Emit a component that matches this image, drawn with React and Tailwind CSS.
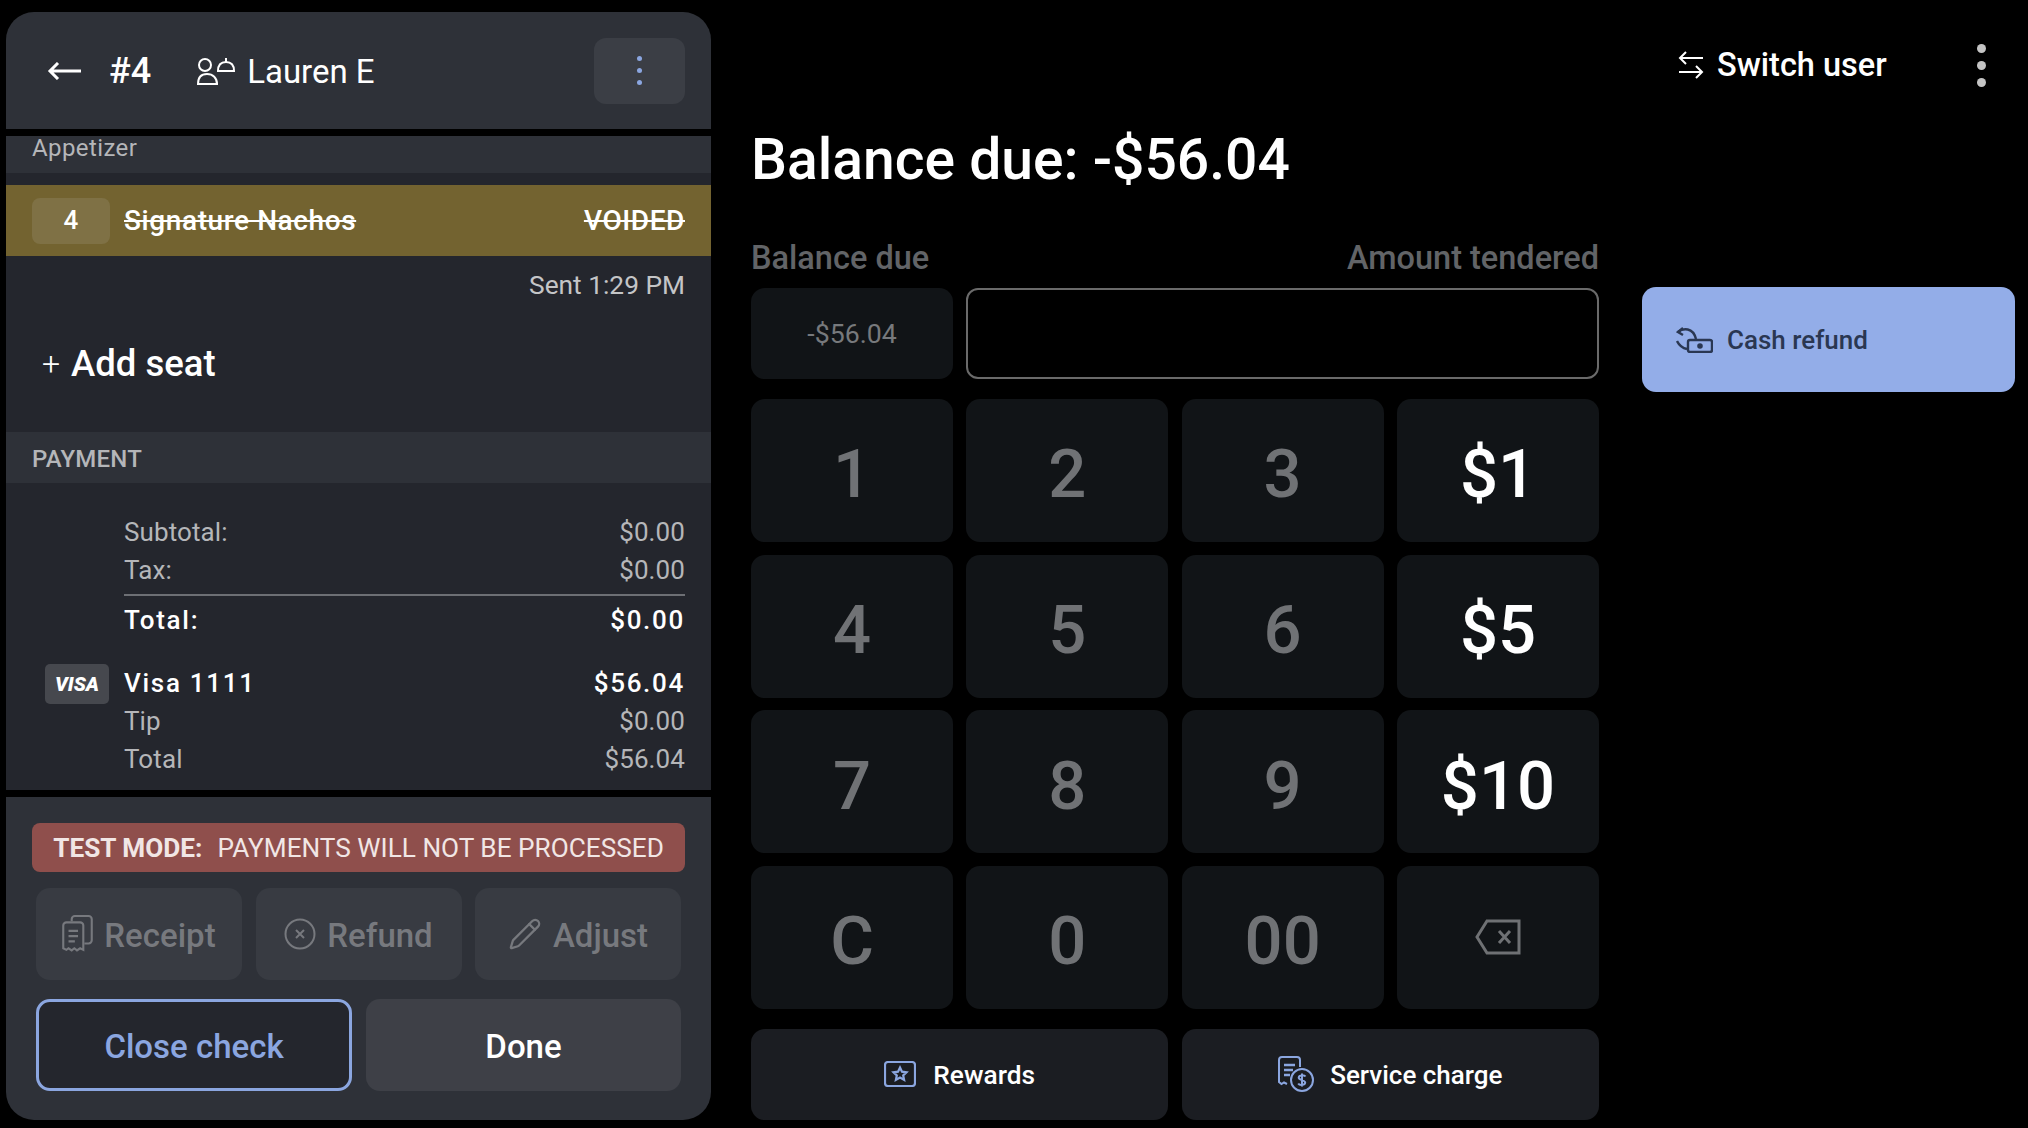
import { Pencil } from "lucide-react";

const SANS = "font-['Roboto','Liberation_Sans',sans-serif]";

const BackArrow = () => (
  <svg width="34" height="18" viewBox="0 0 34 18" fill="none" stroke="currentColor" strokeWidth="3">
    <path d="M34 9H3M11 1L3 9l8 8" />
  </svg>
);

const ServerIcon = () => (
  <svg width="38" height="28" viewBox="0 0 38 28" fill="none" stroke="currentColor" strokeWidth="2">
    <circle cx="8" cy="8" r="6" />
    <path d="M1 27c0-6 3-10 9-10s10 4 10 10z" />
    <path d="M21 14c0-6 3-9 8-9s8 3 8 9zM29 1v4" />
  </svg>
);

const SwapIcon = () => (
  <svg width="26" height="30" viewBox="0 0 26 30" fill="none" stroke="currentColor" strokeWidth="2">
    <path d="M25 8H2M8 2L2 8l6 6" />
    <path d="M1 22h23M18 16l6 6-6 6" />
  </svg>
);

const CashRefundIcon = () => (
  <svg width="37" height="26" viewBox="0 0 37 26" fill="none" stroke="currentColor" strokeWidth="2.4">
    <path d="M2 5c5-4 15-5 18 7" />
    <path d="M7 1L2 5l5 3" />
    <path d="M1 14c2 4 5 7 10 8" />
    <rect x="12" y="13" width="24" height="12" rx="2" />
    <circle cx="24" cy="19" r="1.6" fill="currentColor" />
  </svg>
);

const ReceiptIcon = () => (
  <svg width="31" height="38" viewBox="0 0 29 36" fill="none" stroke="currentColor" strokeWidth="2">
    <path d="M1 10a3 3 0 013-3h13a3 3 0 013 3v23l-3-1.500-3 2-2.500-2-2.500 2-3-2-2 1.500-3-1.500z" />
    <path d="M9 6V4a3 3 0 013-3h13a3 3 0 013 3v20a3 3 0 01-3 3h-4" />
    <path d="M6 15h9M6 20h9M6 25h6" />
  </svg>
);

const RefundIcon = () => (
  <svg width="32" height="32" viewBox="0 0 32 32" fill="none" stroke="currentColor" strokeWidth="2">
    <circle cx="16" cy="16" r="14.500" />
    <path d="M12 12l8 8M20 12l-8 8" />
  </svg>
);

const BackspaceIcon = () => (
  <svg width="46" height="36" viewBox="0 0 46 36" fill="none" stroke="currentColor" strokeWidth="3">
    <path d="M12 2h32v32H12L2 18z" />
    <path d="M24 12l11 12M35 12L24 24" />
  </svg>
);

const RewardsIcon = () => (
  <svg width="32" height="26" viewBox="0 0 32 26" fill="none" stroke="#8ba6e0" strokeWidth="2.2">
    <rect x="1" y="1" width="30" height="24" rx="3" />
    <path d="M16 6.500l2 4.200 4.500.6-3.300 3.100.9 4.500-4.100-2.300-4.100 2.300.9-4.500-3.300-3.100 4.500-.6z" />
  </svg>
);

const ServiceChargeIcon = () => (
  <svg width="36" height="36" viewBox="0 0 36 36" fill="none" stroke="#8ba6e0" strokeWidth="2">
    <path d="M22 11V4a3 3 0 00-3-3H4a3 3 0 00-3 3v22l2.500 2 2.500-1.500 3 1.500" />
    <path d="M6 9h11M6 14h9M6 19h6" strokeWidth="2.500" />
    <circle cx="24" cy="24" r="11" />
    <path d="M27.500 20.500c-1-1.500-6.500-1.800-6.800 1s6.800 2.400 6.500 5.200-5.800 2.800-7 .8M24 17.500v13" />
  </svg>
);

const TotalRow = ({ label, value, strong }) => (
  <div className={`flex justify-between ${strong ? "text-white font-medium tracking-[1.7px]" : "text-[#b5b6b9] tracking-[0.1px]"}`}>
    <span>{label}</span>
    <span>{value}</span>
  </div>
);

const SmallAction = ({ icon, label }) => (
  <button className="w-[206px] h-[92px] flex items-center justify-center gap-[11px] rounded-[14px] bg-[#383b42] text-[#77797e] text-[33px] font-medium">
    {icon}
    <span className="pt-[4px]">{label}</span>
  </button>
);

const Key = ({ children, money }) => (
  <button className={`h-[143px] pt-[8px] flex items-center justify-center rounded-[14px] bg-[#111417] text-[67px] font-medium ${money ? "text-white" : "text-[#707275]"}`}>
    {children}
  </button>
);

const App = () => {
  return (
    <div className={`w-[2028px] h-[1128px] bg-black flex overflow-hidden ${SANS}`}>
      {/* 왼쪽 주문 패널 */}
      <div className="ml-[6px] mt-[12px] w-[705px] h-[1108px] flex flex-col rounded-[28px] overflow-hidden text-white">
        <div className="h-[117px] shrink-0 bg-[#2e3138] flex items-center pl-[41px] pr-[26px]">
          <BackArrow />
          <span className="ml-[28px] text-[36px] font-medium mr-[46px]">#4</span>
          <ServerIcon />
          <span className="pt-[2px] text-[33px] ml-[12px]">Lauren E</span>
          <div className="ml-auto w-[91px] h-[66px] rounded-[12px] bg-[#3b3e45] flex flex-col items-center justify-center gap-[7px]">
            <span className="w-[5px] h-[5px] rounded-full bg-[#8ba6e0]" />
            <span className="w-[5px] h-[5px] rounded-full bg-[#8ba6e0]" />
            <span className="w-[5px] h-[5px] rounded-full bg-[#8ba6e0]" />
          </div>
        </div>

        <div className="mt-[7px] flex-1 flex flex-col bg-[#24262d]">
          <div className="h-[37px] bg-[#2e3138] pl-[26px] text-[24px] leading-[24px] text-[#b5b6b9] tracking-[0.4px]">Appetizer</div>
          <div className="mt-[12px] h-[71px] bg-[#736330] flex items-center pl-[26px] pr-[26px]">
            <span className="w-[78px] h-[46px] rounded-[8px] bg-[#7f7145] flex items-center justify-center text-[26px] font-medium">4</span>
            <span className="ml-[14px] text-[28px] font-medium tracking-[0.6px] line-through">Signature Nachos</span>
            <span className="ml-auto text-[28px] font-medium tracking-[0.6px] line-through">VOIDED</span>
          </div>
          <div className="mt-[13px] pr-[26px] text-right text-[26.3px] leading-[32px] text-[#c4c5c7]">Sent 1:29 PM</div>
          <div className="mt-[38px] pt-[2px] pl-[36px] flex items-center h-[48px]">
            <span className="text-[32px] mr-[11px] font-light">+</span>
            <span className="text-[36.5px] font-medium">Add seat</span>
          </div>
          <div className="mt-[45px] h-[51px] pt-[2px] bg-[#2e3138] flex items-center pl-[26px] text-[24px] font-medium tracking-[0.2px] text-[#b5b6b9]">PAYMENT</div>

          <div className="pt-[30px] pl-[118px] pr-[26px] text-[26px] leading-[38px]">
            <TotalRow label="Subtotal:" value="$0.00" />
            <TotalRow label="Tax:" value="$0.00" />
            <div className="h-[2px] my-[5px] bg-[#6d6f74]" />
            <TotalRow label="Total:" value="$0.00" strong />
            <div className="relative mt-[25px]">
              <span className="absolute left-[-79px] top-[0px] w-[64px] h-[40px] rounded-[5px] bg-[#46484e] flex items-center justify-center text-[20px] leading-[20px] italic font-black">VISA</span>
              <TotalRow label="Visa 1111" value="$56.04" strong />
            </div>
            <TotalRow label="Tip" value="$0.00" />
            <TotalRow label="Total" value="$56.04" />
          </div>
        </div>

        <div className="mt-[7px] h-[323px] shrink-0 bg-[#2e3138] px-[26px] pt-[26px]">
          <div className="h-[49px] pt-[3px] rounded-[8px] bg-[#8f4f4c] flex items-center justify-center gap-[15px] text-[26.2px] text-[#f1e6e5] whitespace-nowrap">
            <span className="font-bold">TEST MODE:</span>
            <span>PAYMENTS WILL NOT BE PROCESSED</span>
          </div>
          <div className="mt-[16px] mx-[4px] flex justify-between">
            <SmallAction icon={<ReceiptIcon />} label="Receipt" />
            <SmallAction icon={<RefundIcon />} label="Refund" />
            <SmallAction icon={<Pencil size={34} strokeWidth={1.6} />} label="Adjust" />
          </div>
          <div className="mt-[19px] mx-[4px] flex justify-between">
            <button className="w-[316px] h-[92px] pt-[4px] rounded-[14px] border-[3px] border-[#8ba6e0] bg-[#24262d] text-[#8ba6e0] text-[33px] font-medium">Close check</button>
            <button className="w-[315px] h-[92px] pt-[4px] rounded-[14px] bg-[#3e4047] text-white text-[33px] font-medium">Done</button>
          </div>
        </div>
      </div>

      {/* 키패드 영역 */}
      <div className="ml-[40px] w-[848px] flex flex-col">
        <h1 className="mt-[125px] h-[70px] text-[57px] leading-[70px] font-medium text-white whitespace-nowrap">Balance due: -$56.04</h1>
        <div className="mt-[43px] flex justify-between text-[32.5px] leading-[40px] font-medium text-[#626467]">
          <span>Balance due</span>
          <span>Amount tendered</span>
        </div>
        <div className="mt-[10px] grid grid-cols-4 gap-x-[13.33px] gap-y-[12.67px]">
          <div className="h-[91px] pt-[2px] rounded-[14px] bg-[#111417] flex items-center justify-center text-[26.7px] text-[#77797c]">-$56.04</div>
          <div className="col-span-3 h-[91px] rounded-[12px] border-2 border-[#6a6a6a] bg-black" />
        </div>
        <div className="mt-[20px] grid grid-cols-4 gap-x-[13.33px] gap-y-[12.67px]">
          <Key>1</Key>
          <Key>2</Key>
          <Key>3</Key>
          <Key money>$1</Key>
          <Key>4</Key>
          <Key>5</Key>
          <Key>6</Key>
          <Key money>$5</Key>
          <Key>7</Key>
          <Key>8</Key>
          <Key>9</Key>
          <Key money>$10</Key>
          <Key>C</Key>
          <Key>0</Key>
          <Key>00</Key>
          <Key><span className="block -mt-[8px] text-[#6f7174]"><BackspaceIcon /></span></Key>
        </div>
        <div className="mt-[20px] grid grid-cols-2 gap-x-[13.33px]">
          <button className="h-[91px] rounded-[14px] bg-[#1b1d22] flex items-center justify-center gap-[17px] text-[26.3px] font-medium text-white">
            <RewardsIcon />
            <span className="pt-[2px]">Rewards</span>
          </button>
          <button className="h-[91px] rounded-[14px] bg-[#1b1d22] flex items-center justify-center gap-[16px] text-[26px] font-medium text-white">
            <ServiceChargeIcon />
            <span className="pt-[2px]">Service charge</span>
          </button>
        </div>
      </div>

      {/* 오른쪽 컬럼 */}
      <div className="ml-[43px] w-[373px] flex flex-col">
        <div className="mt-[44px] h-[42px] flex items-center text-white">
          <span className="ml-[36px]"><SwapIcon /></span>
          <span className="ml-[13px] text-[32.5px] font-medium whitespace-nowrap">Switch user</span>
          <div className="ml-[90px] flex flex-col gap-[8px]">
            <span className="w-[9px] h-[9px] rounded-full bg-[#c4c4c4]" />
            <span className="w-[9px] h-[9px] rounded-full bg-[#c4c4c4]" />
            <span className="w-[9px] h-[9px] rounded-full bg-[#c4c4c4]" />
          </div>
        </div>
        <button className="mt-[201px] h-[105px] rounded-[14px] bg-[#93ade8] flex items-center pl-[34px] gap-[14px] text-[26px] font-medium text-[#2a3752]">
          <CashRefundIcon />
          <span className="pt-[2px]">Cash refund</span>
        </button>
      </div>
    </div>
  );
};

export default App;
